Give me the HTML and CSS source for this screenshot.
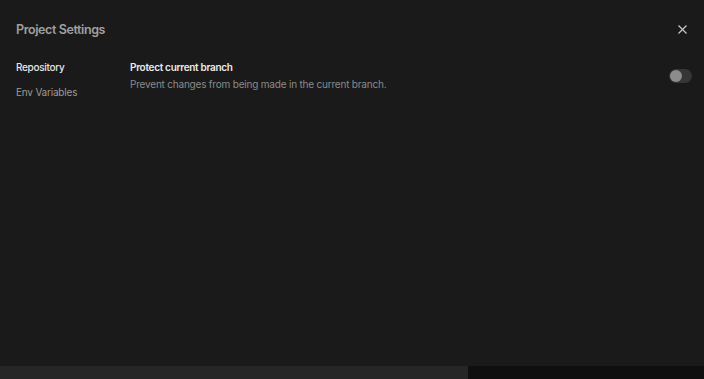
FILE: index.html
```html
<!DOCTYPE html>
<html>
<head>
<meta charset="utf-8">
<link rel="stylesheet" href="styles.css">
</head>
<body>
<div class="modal">
  <header class="head">
    <h1 class="title">Project Settings</h1>
    <button class="close" aria-label="Close">
      <svg width="9" height="9" viewBox="0 0 9 9"><path d="M0.5 0.5 L8.5 8.5 M8.5 0.5 L0.5 8.5" stroke="#c8c8c8" stroke-width="1.2" fill="none"/></svg>
    </button>
  </header>
  <div class="body">
    <nav class="side">
      <div class="nav-item active">Repository</div>
      <div class="nav-item">Env Variables</div>
    </nav>
    <section class="content">
      <div class="setting">
        <div class="setting-text">
          <div class="setting-title">Protect current branch</div>
          <div class="setting-desc">Prevent changes from being made in the current branch.</div>
        </div>
        <div class="toggle"><span class="knob"></span></div>
      </div>
    </section>
  </div>
</div>
<div class="bottom">
  <div class="bottom-left"></div>
  <div class="bottom-right"></div>
</div>
</body>
</html>
```
FILE: styles.css
```css
* { box-sizing: border-box; }
html, body { margin: 0; padding: 0; }
body {
  width: 704px;
  height: 379px;
  background: #1a1a1a;
  font-family: Inter, "Noto Sans", sans-serif;
  overflow: hidden;
  display: flex;
  flex-direction: column;
}
.modal {
  height: 366px;
  display: flex;
  flex-direction: column;
}
.head {
  display: flex;
  align-items: center;
  justify-content: space-between;
  height: 58px;
  padding: 0 14px 0 16px;
}
.title {
  margin: 0;
  font-size: 12.5px;
  font-weight: 600;
  color: #a0a0a0;
  letter-spacing: -0.4px;
}
.close {
  background: none;
  border: 0;
  padding: 0;
  width: 16px;
  height: 16px;
  display: flex;
  align-items: center;
  justify-content: center;
  cursor: pointer;
}
.body {
  display: flex;
  padding: 2px 12px 0 16px;
}
.side {
  width: 114px;
  display: flex;
  flex-direction: column;
  gap: 11px;
}
.nav-item {
  font-size: 10px;
  line-height: 14px;
  color: #9a9a9a;
  letter-spacing: -0.2px;
}
.nav-item.active {
  color: #e6e6e6;
  font-weight: 500;
  letter-spacing: -0.3px;
}
.content { flex: 1; }
.setting {
  display: flex;
  justify-content: space-between;
  align-items: center;
}
.setting-title {
  font-size: 10px;
  line-height: 14px;
  font-weight: 600;
  color: #ececec;
  letter-spacing: -0.3px;
}
.setting-desc {
  margin-top: 3px;
  font-size: 10px;
  line-height: 14px;
  color: #8a8a8a;
  letter-spacing: -0.2px;
}
.toggle {
  width: 23px;
  height: 14px;
  border-radius: 7px;
  background: #363636;
  padding: 1px;
  display: flex;
  align-items: center;
}
.knob {
  width: 12px;
  height: 12px;
  border-radius: 50%;
  background: #8c8c8c;
}
.bottom {
  flex: 1;
  display: flex;
}
.bottom-left { width: 468px; background: #262626; }
.bottom-right { flex: 1; background: #0f0f0f; }
```
